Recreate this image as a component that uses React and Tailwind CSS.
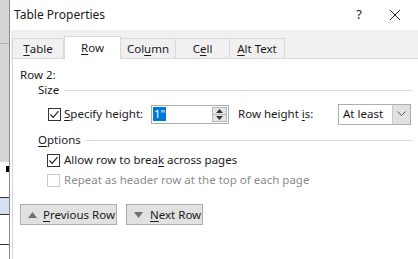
import React from "react";

const U = ({ children }) => <span className="underline underline-offset-2">{children}</span>;

const CheckBox = ({ checked, disabled }) => (
    <div
        className={`flex h-[13px] w-[13px] shrink-0 items-center justify-center border bg-white ${
            disabled ? "border-[#cccccc]" : "border-[#333333]"
        }`}
    >
        {checked && (
            <svg width="11" height="11" viewBox="0 0 11 11">
                <path d="M1.5 5.5 L4.2 8.3 L9.5 2.2" fill="none" stroke="#222" strokeWidth="1.2" />
            </svg>
        )}
    </div>
);

const GroupHead = ({ children, lineClass }) => (
    <div className="flex items-center pl-[25px] pr-[6px]">
        <span>{children}</span>
        <div className={`h-px flex-1 bg-[#dcdcdc] ${lineClass}`} />
    </div>
);

const Tab = ({ children, active, w }) =>
    active ? (
        <div className={`${w} -mb-px flex h-[23px] items-center justify-center border-x border-t border-[#d9d9d9] bg-white`}>
            {children}
        </div>
    ) : (
        <div className={`${w} flex h-[20px] items-center justify-center border-r border-t border-[#d9d9d9] bg-[#f0f0f0] pt-[1px]`}>
            {children}
        </div>
    );

export default function App() {
    return (
        <div className="flex h-[259px] w-[418px] overflow-hidden whitespace-nowrap bg-white font-['Noto_Sans',sans-serif] text-[11.5px] text-[#1a1a1a]">
            {/* document behind the dialog */}
            <div className="flex w-[10px] flex-col border-r border-[#8a8a8a] bg-[#d6d6d6]">
                <div className="h-[44px] border-b border-[#b0b0b0]" />
                <div className="h-[118px]" />
                <div className="h-[14px] bg-white">
                    <div className="ml-auto mt-[4px] h-[6px] w-[3px] bg-black" />
                </div>
                <div className="h-[22px] border-b border-[#333] bg-white" />
                <div className="h-[17px] border-b border-[#333] bg-[#d5e1f0]" />
                <div className="h-[30px] border-b border-[#333] bg-white" />
                <div className="flex-1 bg-white" />
            </div>

            {/* dialog */}
            <div className="flex flex-1 flex-col pl-px">
                <div className="flex h-[30px] items-center pl-[3px] text-[12px]">
                    <span>Table Properties</span>
                    <span className="ml-auto mr-[27px] text-[13px] text-[#222]">?</span>
                    <svg width="12" height="12" viewBox="0 0 12 12" className="mr-[17px]">
                        <path d="M1 1 L11 11 M11 1 L1 11" stroke="#222" strokeWidth="1" />
                    </svg>
                </div>

                <div className="flex h-[29px] items-end border-b border-[#d9d9d9] bg-[#f0f0f0] pl-px">
                    <div className="flex items-end border-l border-[#d9d9d9]">
                        <Tab w="w-[51px]">
                            <U>T</U>able
                        </Tab>
                    </div>
                    <Tab active w="w-[57px]">
                        <U>R</U>ow
                    </Tab>
                    <Tab w="w-[55px]">
                        Col<U>u</U>mn
                    </Tab>
                    <Tab w="w-[54px]">
                        C<U>e</U>ll
                    </Tab>
                    <Tab w="w-[55px]">
                        <U>A</U>lt Text
                    </Tab>
                </div>

                <div className="ml-px flex flex-1 flex-col border-l border-[#d9d9d9] bg-white">
                    <div className="mt-[8px] pl-[7px] leading-[16px]">Row 2:</div>

                    <div className="leading-[14px]">
                        <GroupHead lineClass="ml-[5px]">Size</GroupHead>
                    </div>

                    <div className="mt-[7px] flex h-[20px] items-center">
                        <div className="ml-[35px]">
                            <CheckBox checked />
                        </div>
                        <span className="ml-[3px] w-[87px]">
                            <U>S</U>pecify height:
                        </span>
                        <div className="flex h-[19px] w-[78px] items-center border border-[#adadad] bg-white pl-[1px]">
                            <span className="bg-[#0078d7] px-[1px] leading-[14px] text-white">1"</span>
                            <div className="ml-auto mr-px flex h-[15px] w-[15px] flex-col border border-[#b9b9b9] bg-[#e6e6e6]">
                                <div className="flex flex-1 items-center justify-center border-b border-[#b9b9b9]">
                                    <svg width="7" height="4" viewBox="0 0 7 4">
                                        <path d="M3.5 0 L7 4 L0 4 Z" fill="#333" />
                                    </svg>
                                </div>
                                <div className="flex flex-1 items-center justify-center">
                                    <svg width="7" height="4" viewBox="0 0 7 4">
                                        <path d="M0 0 L7 0 L3.5 4 Z" fill="#333" />
                                    </svg>
                                </div>
                            </div>
                        </div>
                        <span className="ml-[9px] w-[100px]">
                            Row height <U>i</U>s:
                        </span>
                        <div className="flex h-[21px] w-[73px] items-center border border-[#adadad] bg-white">
                            <span className="pl-[4px]">At least</span>
                            <div className="ml-auto flex h-full w-[18px] items-center justify-center border-l border-[#c8c8c8] bg-[#e1e1e1]">
                                <svg width="9" height="6" viewBox="0 0 9 6">
                                    <path d="M0.5 0.5 L4.5 4.5 L8.5 0.5" fill="none" stroke="#555" strokeWidth="1" />
                                </svg>
                            </div>
                        </div>
                    </div>

                    <div className="mt-[8px] leading-[16px]">
                        <GroupHead lineClass="ml-[5px]">
                            <U>O</U>ptions
                        </GroupHead>
                    </div>

                    <div className="mt-[2px] flex h-[20px] items-center pl-[34px]">
                        <CheckBox checked />
                        <span className="ml-[4px]">
                            Allow row to brea<U>k</U> across pages
                        </span>
                    </div>
                    <div className="flex h-[20px] items-center pl-[34px]">
                        <CheckBox disabled />
                        <span className="ml-[4px] text-[#8c8c8c]">Repeat as header row at the top of each page</span>
                    </div>

                    <div className="mt-[14px] flex gap-[9px] pl-[7px]">
                        <button className="flex h-[21px] w-[97px] items-center border border-[#adadad] bg-[#e1e1e1] pl-[7px]">
                            <svg width="9" height="6" viewBox="0 0 9 6">
                                <path d="M4.5 0 L9 6 L0 6 Z" fill="#707070" />
                            </svg>
                            <span className="ml-[6px]">
                                <U>P</U>revious Row
                            </span>
                        </button>
                        <button className="flex h-[21px] w-[77px] items-center border border-[#adadad] bg-[#e1e1e1] pl-[7px]">
                            <svg width="9" height="6" viewBox="0 0 9 6">
                                <path d="M0 0 L9 0 L4.5 6 Z" fill="#707070" />
                            </svg>
                            <span className="ml-[7px]">
                                <U>N</U>ext Row
                            </span>
                        </button>
                    </div>
                </div>
            </div>
        </div>
    );
}
